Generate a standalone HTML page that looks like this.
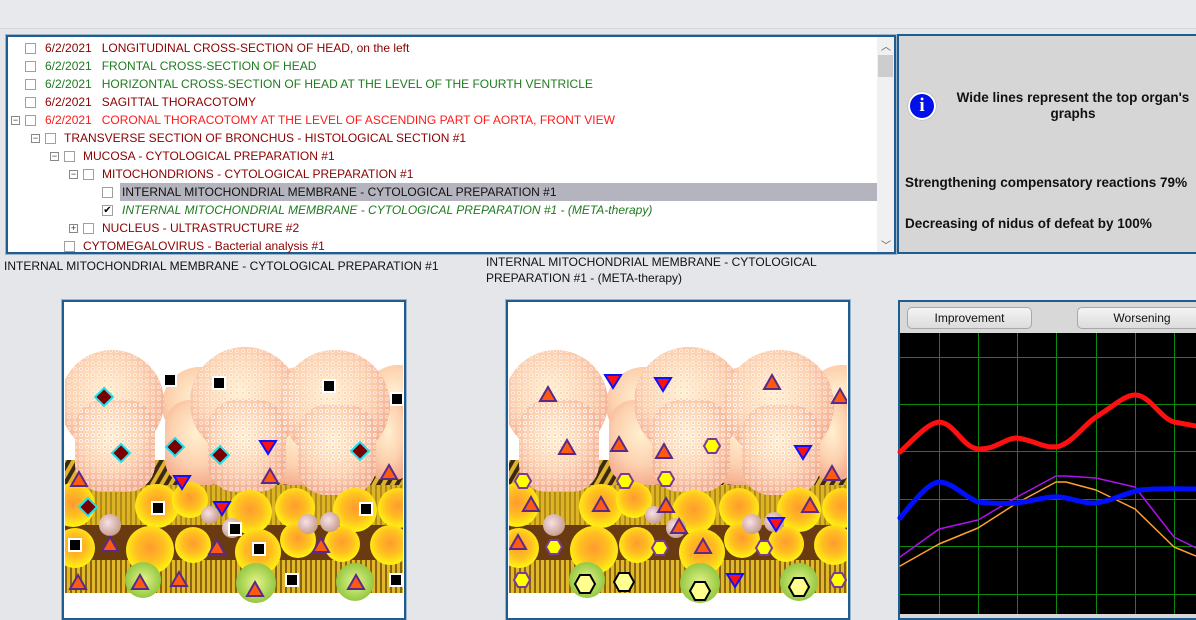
<!DOCTYPE html>
<html><head><meta charset="utf-8"><style>
*{margin:0;padding:0;box-sizing:border-box}
body{width:1196px;height:614px;overflow:hidden;background:#e4e6ea;font-family:"Liberation Sans",sans-serif;position:relative}
.abs{position:absolute}
#top{left:0;top:0;width:1196px;height:29px;background:#e8e9ec;border-bottom:1px solid #d4d6da}
#tree{left:6px;top:35px;width:890px;height:219px;background:#fff;border:2px solid #1f5c8f;outline:1px solid #9db3c8}
.row{position:absolute;height:18px;line-height:18px;font-size:12px;white-space:nowrap}
.cb{position:absolute;top:4px;width:11px;height:11px;border:1px solid #a0a0a0;background:#fff}
.pm{position:absolute;top:5px;width:9px;height:9px;border:1px solid #888;background:#fff;font-size:9px;line-height:7px;text-align:center;color:#333}
.t{position:absolute;top:0}
.dr{color:#8b0000}.gr{color:#1e7b1e}.rd{color:#ff1a1a}
#sb{left:869px;top:0;width:17px;height:215px;background:#f0f0f0}
#info{left:897px;top:34px;width:299px;height:220px;background:#d6d6d6;border:2px solid #1f5c8f;border-right:none}
.bt{font-weight:bold;font-size:13.5px;color:#111;position:absolute}
.cap{font-size:12px;color:#111;position:absolute;line-height:16px}
.frame{position:absolute;top:300px;height:320px;background:#fff;border:2px solid #1f5c8f;outline:1px solid #9db3c8}
#chart{left:898px;top:300px;width:300px;height:320px;border:2px solid #1f5c8f;border-right:none;background:#d8d8d8}
.btn{position:absolute;top:5px;height:22px;border:1px solid #a8a8a8;border-radius:5px;background:linear-gradient(#f4f4f4,#dcdcdc);font-size:12px;text-align:center;line-height:20px;color:#111}
</style></head><body>
<div id="top" class="abs"></div>
<div id="tree" class="abs">
 <div class="row" style="left:0;top:2px"><div class="cb" style="left:17px"></div><span class="t dr" style="left:37px">6/2/2021&nbsp;&nbsp; LONGITUDINAL CROSS-SECTION OF HEAD, on the left</span></div>
 <div class="row" style="left:0;top:20px"><div class="cb" style="left:17px"></div><span class="t gr" style="left:37px">6/2/2021&nbsp;&nbsp; FRONTAL CROSS-SECTION OF HEAD</span></div>
 <div class="row" style="left:0;top:38px"><div class="cb" style="left:17px"></div><span class="t gr" style="left:37px">6/2/2021&nbsp;&nbsp; HORIZONTAL CROSS-SECTION OF HEAD AT THE LEVEL OF THE FOURTH VENTRICLE</span></div>
 <div class="row" style="left:0;top:56px"><div class="cb" style="left:17px"></div><span class="t dr" style="left:37px">6/2/2021&nbsp;&nbsp; SAGITTAL THORACOTOMY</span></div>
 <div class="row" style="left:0;top:74px"><div class="pm" style="left:3px">−</div><div class="cb" style="left:17px"></div><span class="t rd" style="left:37px">6/2/2021&nbsp;&nbsp; CORONAL THORACOTOMY AT THE LEVEL OF ASCENDING PART OF AORTA, FRONT VIEW</span></div>
 <div class="row" style="left:0;top:92px"><div class="pm" style="left:23px">−</div><div class="cb" style="left:37px"></div><span class="t dr" style="left:56px">TRANSVERSE SECTION OF BRONCHUS - HISTOLOGICAL SECTION #1</span></div>
 <div class="row" style="left:0;top:110px"><div class="pm" style="left:42px">−</div><div class="cb" style="left:56px"></div><span class="t dr" style="left:75px">MUCOSA - CYTOLOGICAL PREPARATION #1</span></div>
 <div class="row" style="left:0;top:128px"><div class="pm" style="left:61px">−</div><div class="cb" style="left:75px"></div><span class="t dr" style="left:94px">MITOCHONDRIONS - CYTOLOGICAL PREPARATION #1</span></div>
 <div class="row" style="left:0;top:146px;width:869px"><div class="cb" style="left:94px"></div><div style="position:absolute;left:112px;top:0;width:757px;height:18px;background:#b4b4be"></div><span class="t" style="left:114px;color:#111">INTERNAL MITOCHONDRIAL MEMBRANE - CYTOLOGICAL PREPARATION #1</span></div>
 <div class="row" style="left:0;top:164px"><div class="cb" style="left:94px;font-size:10px;line-height:9px;text-align:center">✔</div><span class="t gr" style="left:114px;font-style:italic">INTERNAL MITOCHONDRIAL MEMBRANE - CYTOLOGICAL PREPARATION #1 - (META-therapy)</span></div>
 <div class="row" style="left:0;top:182px"><div class="pm" style="left:61px">+</div><div class="cb" style="left:75px"></div><span class="t dr" style="left:94px">NUCLEUS - ULTRASTRUCTURE #2</span></div>
 <div class="row" style="left:0;top:200px"><div class="cb" style="left:56px"></div><span class="t dr" style="left:75px">CYTOMEGALOVIRUS - Bacterial analysis #1</span></div>
 <div id="sb" class="abs"><div style="position:absolute;left:1px;top:18px;width:15px;height:22px;background:#cdcdcd"></div><div style="position:absolute;left:4px;top:1px;font-size:10px;color:#555">︿</div><div style="position:absolute;left:4px;top:200px;font-size:10px;color:#555">﹀</div></div>
</div>
<div id="info" class="abs">
 <div style="position:absolute;left:9px;top:56px;width:28px;height:28px;border-radius:50%;background:#0010e8;border:2px solid #fff;box-shadow:0 0 1px #666;color:#fff;font-weight:bold;font-size:19px;text-align:center;line-height:24px;font-family:'Liberation Serif',serif">i</div>
 <div class="bt" style="left:44px;top:54px;width:260px;text-align:center;line-height:16px">Wide lines represent the top organ's graphs</div>
 <div class="bt" style="left:6px;top:139px">Strengthening compensatory reactions 79%</div>
 <div class="bt" style="left:6px;top:180px">Decreasing of nidus of defeat by 100%</div>
</div>
<div class="cap" style="left:4px;top:258px">INTERNAL MITOCHONDRIAL MEMBRANE - CYTOLOGICAL PREPARATION #1</div>
<div class="cap" style="left:486px;top:254px">INTERNAL MITOCHONDRIAL MEMBRANE - CYTOLOGICAL<br>PREPARATION #1 - (META-therapy)</div>
<div class="frame" style="left:62px;width:344px"></div>
<div class="frame" style="left:506px;width:344px"></div>
<div id="chart" class="abs"><div class="btn" style="left:7px;width:125px">Improvement</div><div class="btn" style="left:177px;width:130px">Worsening</div></div>
<svg class="abs" style="left:0;top:0" width="1196" height="614">
<defs>
 <radialGradient id="bulb" cx="45%" cy="40%" r="60%"><stop offset="0" stop-color="#fff0d0"/><stop offset=".6" stop-color="#fdd2b0"/><stop offset="1" stop-color="#f4ae90"/></radialGradient>
 <radialGradient id="yel" cx="50%" cy="45%" r="55%"><stop offset="0" stop-color="#ff9a30"/><stop offset=".55" stop-color="#ffc020"/><stop offset="1" stop-color="#fff510"/></radialGradient>
 <radialGradient id="grn" cx="50%" cy="50%" r="55%"><stop offset="0" stop-color="#e6f48a"/><stop offset="1" stop-color="#8cc43c"/></radialGradient>
 <radialGradient id="pk" cx="40%" cy="40%" r="60%"><stop offset="0" stop-color="#f8e0e8"/><stop offset="1" stop-color="#c8a090"/></radialGradient>
 <pattern id="dots" width="6" height="6" patternUnits="userSpaceOnUse"><circle cx="3" cy="3" r="2" fill="#ffffff" opacity=".55"/><circle cx="3" cy="3" r="1" fill="#f09070" opacity=".4"/></pattern>
 <pattern id="str" width="5" height="10" patternUnits="userSpaceOnUse"><rect width="5" height="10" fill="#e0b828"/><rect width="2" height="10" fill="#8a6410"/></pattern>
 <pattern id="dk" width="8" height="8" patternUnits="userSpaceOnUse" patternTransform="rotate(30)"><rect width="8" height="8" fill="#e0b030"/><rect width="4" height="8" fill="#3a2a10"/></pattern>
 <clipPath id="cl"><rect x="65" y="303" width="338" height="311"/></clipPath>
 <clipPath id="cr"><rect x="509" y="303" width="338" height="311"/></clipPath>
 <g id="scene">
  <rect x="65" y="460" width="340" height="30" fill="url(#dk)"/>
  <rect x="65" y="485" width="340" height="50" fill="#d8b020"/>
  <rect x="65" y="485" width="340" height="50" fill="url(#str)" opacity=".5"/>
  <rect x="65" y="525" width="340" height="38" fill="#6a3a10"/>
  <rect x="65" y="560" width="340" height="33" fill="url(#str)"/>
  <g fill="url(#bulb)">
   <circle cx="200" cy="405" r="38"/><circle cx="300" cy="405" r="38"/><circle cx="398" cy="400" r="35"/>
   <rect x="165" y="400" width="70" height="85" rx="25"/><rect x="265" y="400" width="70" height="85" rx="25"/><rect x="370" y="400" width="40" height="80" rx="15"/>
   <circle cx="112" cy="402" r="52"/><rect x="75" y="400" width="80" height="92" rx="28"/>
   <circle cx="245" cy="402" r="55"/><rect x="208" y="400" width="78" height="92" rx="28"/>
   <circle cx="335" cy="405" r="55"/><rect x="298" y="405" width="78" height="90" rx="28"/>
  </g>
  <g fill="url(#dots)">
   <circle cx="112" cy="402" r="52"/><rect x="75" y="400" width="80" height="92" rx="28"/>
   <circle cx="245" cy="402" r="55"/><rect x="208" y="400" width="78" height="92" rx="28"/>
   <circle cx="335" cy="405" r="55"/><rect x="298" y="405" width="78" height="90" rx="28"/>
  </g>
  <g fill="url(#yel)">
   <circle cx="73" cy="505" r="22"/><circle cx="157" cy="506" r="22"/><circle cx="190" cy="500" r="18"/><circle cx="295" cy="508" r="20"/><circle cx="250" cy="512" r="22"/><circle cx="355" cy="510" r="22"/><circle cx="398" cy="508" r="20"/>
   <circle cx="75" cy="548" r="20"/><circle cx="150" cy="550" r="24"/><circle cx="193" cy="545" r="18"/><circle cx="258" cy="552" r="23"/><circle cx="298" cy="540" r="18"/><circle cx="342" cy="544" r="18"/><circle cx="390" cy="545" r="20"/>
  </g>
  <g fill="url(#pk)"><circle cx="110" cy="525" r="11"/><circle cx="210" cy="515" r="9"/><circle cx="232" cy="528" r="10"/><circle cx="308" cy="524" r="10"/><circle cx="330" cy="522" r="10"/></g>
  <g fill="url(#grn)"><circle cx="143" cy="580" r="18"/><circle cx="256" cy="583" r="20"/><circle cx="355" cy="582" r="19"/></g>
 </g>
</defs>
<g clip-path="url(#cl)"><use href="#scene"/>
 <g fill="#000" stroke="#fff" stroke-width="2">
  <rect x="164" y="374" width="12" height="12"/><rect x="213" y="377" width="12" height="12"/><rect x="323" y="380" width="12" height="12"/><rect x="391" y="393" width="12" height="12"/><rect x="152" y="502" width="12" height="12"/><rect x="360" y="503" width="12" height="12"/><rect x="69" y="539" width="12" height="12"/><rect x="229" y="523" width="12" height="12"/><rect x="253" y="543" width="12" height="12"/><rect x="286" y="574" width="12" height="12"/><rect x="390" y="574" width="12" height="12"/>
 </g>
 <g fill="#7a0000" stroke="#20e0f0" stroke-width="2">
  <path d="M104 388l9 9-9 9-9-9z"/><path d="M121 444l9 9-9 9-9-9z"/><path d="M175 438l9 9-9 9-9-9z"/><path d="M220 446l9 9-9 9-9-9z"/><path d="M360 442l9 9-9 9-9-9z"/><path d="M88 498l9 9-9 9-9-9z"/>
 </g>
 <g fill="#ff1010" stroke="#1010ff" stroke-width="2"><path d="M260 441h16l-8 13z"/><path d="M174 476h16l-8 13z"/><path d="M214 502h16l-8 13z"/></g>
 <g fill="#ff5a10" stroke="#5a2a8a" stroke-width="2"><path d="M79 472l8 14h-16z"/><path d="M270 469l8 14h-16z"/><path d="M389 465l8 14h-16z"/><path d="M110 537l8 14h-16z"/><path d="M217 540l8 14h-16z"/><path d="M321 538l8 14h-16z"/><path d="M78 575l8 14h-16z"/><path d="M140 575l8 14h-16z"/><path d="M179 572l8 14h-16z"/><path d="M255 582l8 14h-16z"/><path d="M356 575l8 14h-16z"/></g>
</g>
<g clip-path="url(#cr)"><use href="#scene" transform="translate(444,0)"/>
 <g fill="#ff5a10" stroke="#5a2a8a" stroke-width="2"><path d="M548 387l8 14h-16z"/><path d="M772 375l8 14h-16z"/><path d="M840 389l8 14h-16z"/><path d="M567 440l8 14h-16z"/><path d="M619 437l8 14h-16z"/><path d="M664 444l8 14h-16z"/><path d="M531 497l8 14h-16z"/><path d="M601 497l8 14h-16z"/><path d="M679 519l8 14h-16z"/><path d="M518 535l8 14h-16z"/><path d="M703 539l8 14h-16z"/><path d="M666 498l8 14h-16z"/><path d="M810 498l8 14h-16z"/><path d="M832 466l8 14h-16z"/></g>
 <g fill="#ff1010" stroke="#1010ff" stroke-width="2"><path d="M605 375h16l-8 13z"/><path d="M655 378h16l-8 13z"/><path d="M795 446h16l-8 13z"/><path d="M768 518h16l-8 13z"/><path d="M727 574h16l-8 13z"/></g>
 <g fill="#ffff00" stroke="#7a3a9a" stroke-width="2"><path d="M704 446l4-7h8l4 7-4 7h-8z"/><path d="M515 481l4-7h8l4 7-4 7h-8z"/><path d="M617 481l4-7h8l4 7-4 7h-8z"/><path d="M658 479l4-7h8l4 7-4 7h-8z"/><path d="M546 547l4-7h8l4 7-4 7h-8z"/><path d="M652 548l4-7h8l4 7-4 7h-8z"/><path d="M756 548l4-7h8l4 7-4 7h-8z"/><path d="M514 580l4-7h8l4 7-4 7h-8z"/><path d="M830 580l4-7h8l4 7-4 7h-8z"/></g>
 <g fill="#ffff90" stroke="#000" stroke-width="2"><path d="M575 584l5-9h10l5 9-5 9h-10z"/><path d="M614 582l5-9h10l5 9-5 9h-10z"/><path d="M690 591l5-9h10l5 9-5 9h-10z"/><path d="M789 587l5-9h10l5 9-5 9h-10z"/></g>
</g>
<rect x="900" y="333" width="296" height="281" fill="#000"/>
<g stroke="#0a8a0a" stroke-width="1">
 <path d="M939.5 333V614M978.5 333V614M1017.5 333V614M1056.5 333V614M1096.5 333V614M1135.5 333V614M1174.5 333V614"/>
 <path d="M900 357.5H1196M900 404.5H1196M900 451.5H1196M900 499.5H1196M900 546.5H1196M900 594.5H1196"/>
</g>
<g fill="none" stroke-linejoin="round" stroke-linecap="round">
 <path d="M900 566L939 544L978 528L1017 503L1056 482L1066 482L1096 490L1135 509L1174 547L1196 556" stroke="#ffa030" stroke-width="1.5"/>
 <path d="M900 557L939 529L978 520L1017 497L1056 476L1066 476L1096 478L1135 487L1174 537L1196 548" stroke="#b010f0" stroke-width="1.5"/>
 <path d="M900 518C915 500 928 483 939 482C952 482 965 497 978 502C995 504 1005 504 1017 503C1035 501 1045 496 1060 497C1075 499 1085 504 1096 503C1115 500 1125 493 1140 490C1160 488 1180 489 1196 489" stroke="#0010ff" stroke-width="5"/>
 <path d="M900 452C915 438 928 423 939 422C955 423 962 447 978 449C995 450 1005 438 1017 438C1035 440 1045 450 1060 446C1075 440 1085 424 1096 417C1115 405 1125 395 1135 395C1150 395 1160 418 1174 422L1196 426" stroke="#ff1010" stroke-width="5"/>
</g>
</svg>
</body></html>
